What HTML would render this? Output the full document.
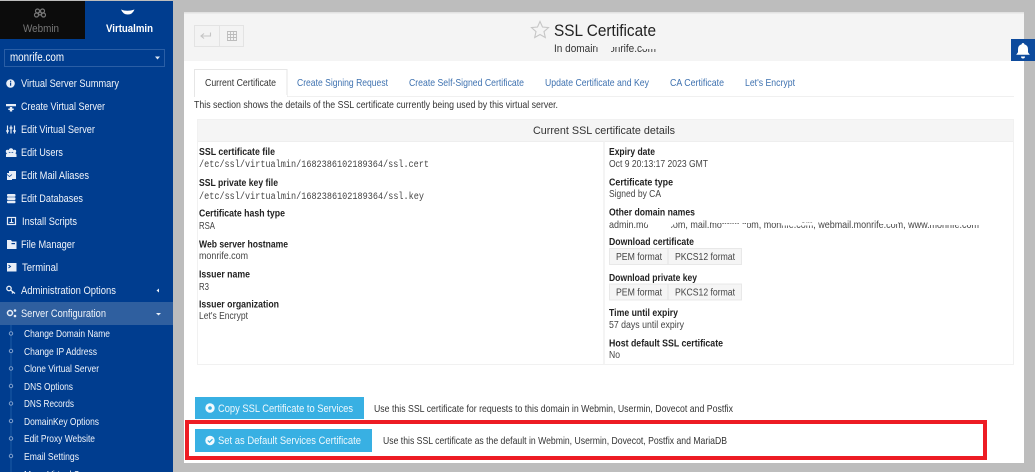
<!DOCTYPE html>
<html><head><meta charset="utf-8"><style>
html,body{margin:0;padding:0;width:1035px;height:472px;overflow:hidden;background:#bdbdbd}
svg{display:block;filter:blur(.25px)}
text{font-family:"Liberation Sans",sans-serif;font-size:10.5px;fill:#333}
.m{fill:#f0f4fa;font-size:11px}
.s{fill:#f0f4fa;font-size:10.5px}
.b{font-weight:bold;fill:#222;font-size:10.5px}
.v{fill:#444;font-size:10.5px}
.c{font-family:"Liberation Mono",monospace;fill:#444;font-size:10px}
.t{fill:#3f72b0;font-size:10.5px}
</style></head><body>
<svg width="1035" height="472" viewBox="0 0 1035 472" xmlns="http://www.w3.org/2000/svg">
<rect width="1035" height="472" fill="#bdbdbd"/>
<rect x="0" y="1" width="173" height="471" fill="#003d8f"/>
<rect x="0" y="1" width="85" height="38" fill="#0c0c0c"/>
<g fill="none" stroke="#777" stroke-width="1.2"><circle cx="37.500" cy="11" r="2"/><circle cx="42.500" cy="11" r="2"/><circle cx="36.500" cy="15" r="2"/><circle cx="43.500" cy="15" r="2"/><circle cx="40" cy="13.500" r="1.500"/></g>
<text x="23" y="32" textLength="36" lengthAdjust="spacingAndGlyphs" style="fill:#777;font-size:11px">Webmin</text>
<path d="M121 9.500q6 2.500 13.500 0q-2 5-6.700 5q-4.800 0-6.800-5z" fill="#fff"/>
<text x="106" y="32" textLength="47" lengthAdjust="spacingAndGlyphs" style="fill:#fff;font-size:11px;font-weight:bold">Virtualmin</text>
<rect x="4.500" y="49.500" width="160" height="17" fill="none" stroke="#2a5ea5"/>
<text x="10" y="61" textLength="54" lengthAdjust="spacingAndGlyphs" style="fill:#fff;font-size:11.5px">monrife.com</text>
<path d="M155 56.500h5l-2.500 3z" fill="#dfe8f4"/>

<!-- main menu icons -->
<circle cx="10.500" cy="83.500" r="4.300" fill="#e8eef7"/><rect x="10" y="82.500" width="1.200" height="3.200" fill="#003d8f"/><rect x="10" y="80.700" width="1.200" height="1.200" fill="#003d8f"/>
<path d="M6 104h10v2.200H6zM9.800 107h2.400v1.500h1.500v1.500h-1.500v1.500H9.800V110H8.300v-1.500h1.500z" fill="#e8eef7"/>
<g stroke="#e8eef7" stroke-width="1.200" fill="none"><path d="M7.500 125.500v8M11 125.500v8M14.500 125.500v8M6 131h3M9.500 128h3M13 131h3"/></g>
<g fill="#e8eef7"><circle cx="11" cy="150.500" r="2.300"/><circle cx="7.500" cy="151.500" r="1.700"/><circle cx="14.500" cy="151.500" r="1.700"/><path d="M6 157v-2.500q1-2 2.500-1.500l5 0q2-.5 3 1.500v2.500z"/></g>
<g fill="#e8eef7"><path d="M9 171h7v8H9z"/><path d="M7 173h5v7H7z"/></g><path d="M7 174.500l2.500 2 2.500-2" stroke="#003d8f" fill="none" stroke-width=".7"/>
<g fill="#e8eef7"><rect x="7" y="194" width="8.500" height="2.700" rx="1"/><rect x="7" y="197.300" width="8.500" height="2.700" rx="1"/><rect x="7" y="200.600" width="8.500" height="2.700" rx="1"/></g>
<rect x="7.500" y="217.500" width="8" height="7" fill="none" stroke="#e8eef7" stroke-width="1.200"/><path d="M11.500 218.500v3.500M9.500 222.500h4" stroke="#e8eef7"/>
<path d="M7 240h4l1 1.500h4.500v7.500H7z" fill="#e8eef7"/><rect x="11.500" y="243" width="3.500" height="1.200" fill="#003d8f"/>
<rect x="7" y="263" width="9.500" height="8.500" fill="#e8eef7"/><path d="M8.500 265l2 1.500-2 1.500" stroke="#003d8f" fill="none"/>
<circle cx="9" cy="288.500" r="2.200" fill="none" stroke="#e8eef7" stroke-width="1.300"/><path d="M10.500 290l4.500 3.500M13 292l-1 1.500" stroke="#e8eef7" stroke-width="1.300"/>
<rect x="0" y="302" width="173" height="23" fill="#2f5f9f"/>
<circle cx="10" cy="313" r="2.500" fill="none" stroke="#e8eef7" stroke-width="1.500"/><circle cx="15" cy="310.500" r="1.300" fill="#e8eef7"/><circle cx="15" cy="316" r="1.300" fill="#e8eef7"/>
<path d="M159 288.500v4l-2.500-2z" fill="#e8eef7"/>
<path d="M156 313h5l-2.500 2.500z" fill="#e8eef7"/>

<text class="m" x="21" y="87" textLength="98" lengthAdjust="spacingAndGlyphs">Virtual Server Summary</text>
<text class="m" x="21" y="110" textLength="84" lengthAdjust="spacingAndGlyphs">Create Virtual Server</text>
<text class="m" x="21" y="133" textLength="74" lengthAdjust="spacingAndGlyphs">Edit Virtual Server</text>
<text class="m" x="21" y="156" textLength="42" lengthAdjust="spacingAndGlyphs">Edit Users</text>
<text class="m" x="21" y="179" textLength="68" lengthAdjust="spacingAndGlyphs">Edit Mail Aliases</text>
<text class="m" x="21" y="202" textLength="62" lengthAdjust="spacingAndGlyphs">Edit Databases</text>
<text class="m" x="22" y="225" textLength="55" lengthAdjust="spacingAndGlyphs">Install Scripts</text>
<text class="m" x="21" y="248" textLength="54" lengthAdjust="spacingAndGlyphs">File Manager</text>
<text class="m" x="22" y="271" textLength="36" lengthAdjust="spacingAndGlyphs">Terminal</text>
<text class="m" x="21" y="294" textLength="95" lengthAdjust="spacingAndGlyphs">Administration Options</text>
<text class="m" x="21" y="317" textLength="85" lengthAdjust="spacingAndGlyphs">Server Configuration</text>

<!-- submenu -->
<rect x="10.500" y="325" width="1" height="147" fill="#1d5aa6"/>
<g fill="#003d8f" stroke="#7f9fcb" stroke-width="1"><circle cx="11" cy="333.500" r="1.700"/><circle cx="11" cy="351" r="1.700"/><circle cx="11" cy="368.500" r="1.700"/><circle cx="11" cy="386" r="1.700"/><circle cx="11" cy="403.500" r="1.700"/><circle cx="11" cy="421" r="1.700"/><circle cx="11" cy="438.500" r="1.700"/><circle cx="11" cy="456" r="1.700"/></g>
<text class="s" x="24" y="337" textLength="86" lengthAdjust="spacingAndGlyphs">Change Domain Name</text>
<text class="s" x="24" y="355" textLength="73" lengthAdjust="spacingAndGlyphs">Change IP Address</text>
<text class="s" x="24" y="372" textLength="75" lengthAdjust="spacingAndGlyphs">Clone Virtual Server</text>
<text class="s" x="24" y="390" textLength="49" lengthAdjust="spacingAndGlyphs">DNS Options</text>
<text class="s" x="24" y="407" textLength="50" lengthAdjust="spacingAndGlyphs">DNS Records</text>
<text class="s" x="24" y="425" textLength="75" lengthAdjust="spacingAndGlyphs">DomainKey Options</text>
<text class="s" x="24" y="442" textLength="71" lengthAdjust="spacingAndGlyphs">Edit Proxy Website</text>
<text class="s" x="24" y="460" textLength="55" lengthAdjust="spacingAndGlyphs">Email Settings</text>
<text class="s" x="24" y="478" textLength="75" lengthAdjust="spacingAndGlyphs">Move Virtual Server</text>

<!-- panel -->
<rect x="184" y="12" width="840" height="451" fill="#fff"/>
<rect x="184" y="12" width="840" height="49" fill="#f4f4f4"/>
<rect x="184" y="12" width="840" height="1.500" fill="#e2e2e2"/>
<rect x="194.500" y="25.500" width="49" height="21" fill="#f3f3f3" stroke="#e3e3e3"/>
<path d="M219.500 25.500v21" stroke="#e3e3e3"/>
<path d="M210.500 32.500v3.500h-9M204 33.500l-3 2.500 3 2.500" fill="none" stroke="#c4c4c4" stroke-width="1.100"/>
<path d="M227.500 31.500h9v9h-9zM230.500 31.500v9M233.500 31.500v9M227.500 34.500h9M227.500 37.500h9" fill="none" stroke="#bcbcbc" stroke-width=".9"/>
<path d="M540 21.500l2.500 5.500 6 .6-4.500 4 1.300 5.900-5.300-3-5.300 3 1.300-5.900-4.500-4 6-.6z" fill="none" stroke="#c6c6c6" stroke-width="1.100"/>
<text x="554" y="36" textLength="102" lengthAdjust="spacingAndGlyphs" style="font-size:17px;fill:#222">SSL Certificate</text>
<text x="554" y="52" textLength="102" lengthAdjust="spacingAndGlyphs" style="font-size:11px;fill:#333">In domain monrife.com</text>
<rect x="596" y="42" width="24" height="5" fill="#f4f4f4"/><rect x="599" y="47" width="12" height="6.500" fill="#f4f4f4"/><rect x="642" y="42" width="15" height="7" fill="#f4f4f4"/>
<rect x="1011" y="39" width="24" height="22" fill="#0d4a9c"/>
<path d="M1023 43a1.300 1.300 0 0 1 1.300 1.300q3.700 1 3.700 5v3l1.800 2.500h-13.600l1.800-2.500v-3q0-4 3.700-5a1.300 1.300 0 0 1 1.300-1.300zM1021 56.500h4a2 2 0 0 1-4 0z" fill="#fff"/>

<!-- tabs -->
<path d="M194 96.500h820" stroke="#f0f0f0"/>
<path d="M194.500 97V69.500h92.500V97" fill="#fff" stroke="#e6e6e6"/>
<rect x="195" y="95" width="92" height="3" fill="#fff"/>
<text x="205" y="86" textLength="71" lengthAdjust="spacingAndGlyphs" style="fill:#333;font-size:10.5px">Current Certificate</text>
<text class="t" x="297" y="86" textLength="91" lengthAdjust="spacingAndGlyphs">Create Signing Request</text>
<text class="t" x="409" y="86" textLength="115" lengthAdjust="spacingAndGlyphs">Create Self-Signed Certificate</text>
<text class="t" x="545" y="86" textLength="104" lengthAdjust="spacingAndGlyphs">Update Certificate and Key</text>
<text class="t" x="670" y="86" textLength="54" lengthAdjust="spacingAndGlyphs">CA Certificate</text>
<text class="t" x="745" y="86" textLength="50" lengthAdjust="spacingAndGlyphs">Let's Encrypt</text>
<text x="194" y="108" textLength="364" lengthAdjust="spacingAndGlyphs" style="font-size:10.5px;fill:#333">This section shows the details of the SSL certificate currently being used by this virtual server.</text>

<!-- table -->
<rect x="197.500" y="119.500" width="816" height="245" fill="#fff" stroke="#f1f1f1"/>
<rect x="198" y="120" width="815" height="21" fill="#f5f5f5"/>
<path d="M198 141.500h815" stroke="#eeeeee"/>
<path d="M604 141v223" stroke="#f1f1f1" stroke-width="1.500"/>
<text x="533" y="134" textLength="142" lengthAdjust="spacingAndGlyphs" style="font-size:11px;fill:#333">Current SSL certificate details</text>

<text class="b" x="199" y="155" textLength="76" lengthAdjust="spacingAndGlyphs">SSL certificate file</text>
<text class="c" x="199" y="167" textLength="230" lengthAdjust="spacingAndGlyphs">/etc/ssl/virtualmin/1682386102189364/ssl.cert</text>
<text class="b" x="199" y="186" textLength="79" lengthAdjust="spacingAndGlyphs">SSL private key file</text>
<text class="c" x="199" y="199" textLength="225" lengthAdjust="spacingAndGlyphs">/etc/ssl/virtualmin/1682386102189364/ssl.key</text>
<text class="b" x="199" y="216.500" textLength="86" lengthAdjust="spacingAndGlyphs">Certificate hash type</text>
<text class="v" x="199" y="229" textLength="16" lengthAdjust="spacingAndGlyphs">RSA</text>
<text class="b" x="199" y="247.500" textLength="89" lengthAdjust="spacingAndGlyphs">Web server hostname</text>
<text class="v" x="199" y="259" textLength="49" lengthAdjust="spacingAndGlyphs">monrife.com</text>
<text class="b" x="199" y="277.500" textLength="51" lengthAdjust="spacingAndGlyphs">Issuer name</text>
<text class="v" x="199" y="290" textLength="10" lengthAdjust="spacingAndGlyphs">R3</text>
<text class="b" x="199" y="307.500" textLength="80" lengthAdjust="spacingAndGlyphs">Issuer organization</text>
<text class="v" x="199" y="319" textLength="49" lengthAdjust="spacingAndGlyphs">Let's Encrypt</text>

<text class="b" x="609" y="155" textLength="46" lengthAdjust="spacingAndGlyphs">Expiry date</text>
<text class="v" x="609" y="167" textLength="99" lengthAdjust="spacingAndGlyphs">Oct 9 20:13:17 2023 GMT</text>
<text class="b" x="609" y="185.500" textLength="64" lengthAdjust="spacingAndGlyphs">Certificate type</text>
<text class="v" x="609" y="197" textLength="52" lengthAdjust="spacingAndGlyphs">Signed by CA</text>
<text class="b" x="609" y="215.500" textLength="86" lengthAdjust="spacingAndGlyphs">Other domain names</text>
<text class="v" x="609" y="228" textLength="370" lengthAdjust="spacingAndGlyphs">admin.monrife.com, mail.monrife.com, monrife.com, webmail.monrife.com, www.monrife.com</text>
<g fill="#fff"><rect x="609" y="218" width="8" height="3"/><rect x="646" y="218" width="30" height="6.500"/><rect x="648" y="224" width="23" height="5"/><rect x="712" y="218" width="40" height="5"/><rect x="722" y="224" width="25" height="5"/><rect x="770" y="219" width="30" height="4"/><rect x="782" y="223" width="32" height="2.500"/><rect x="880" y="222" width="10" height="2"/><rect x="928" y="218" width="51" height="7"/><rect x="860" y="219" width="13" height="3"/><rect x="886" y="219" width="12" height="5"/></g>
<text class="b" x="609" y="245" textLength="85" lengthAdjust="spacingAndGlyphs">Download certificate</text>
<rect x="609.500" y="248.500" width="132" height="16" fill="#f5f5f5" stroke="#e8e8e8"/><path d="M668 248.500v16" stroke="#e3e3e3"/>
<text class="v" x="616" y="260" textLength="46" lengthAdjust="spacingAndGlyphs">PEM format</text>
<text class="v" x="675" y="260" textLength="60" lengthAdjust="spacingAndGlyphs">PKCS12 format</text>
<text class="b" x="609" y="281" textLength="88" lengthAdjust="spacingAndGlyphs">Download private key</text>
<rect x="609.500" y="284" width="132" height="16" fill="#f5f5f5" stroke="#e8e8e8"/><path d="M668 284v16" stroke="#e3e3e3"/>
<text class="v" x="616" y="295.500" textLength="46" lengthAdjust="spacingAndGlyphs">PEM format</text>
<text class="v" x="675" y="295.500" textLength="60" lengthAdjust="spacingAndGlyphs">PKCS12 format</text>
<text class="b" x="609" y="316" textLength="69" lengthAdjust="spacingAndGlyphs">Time until expiry</text>
<text class="v" x="609" y="328" textLength="75" lengthAdjust="spacingAndGlyphs">57 days until expiry</text>
<text class="b" x="609" y="346.500" textLength="114" lengthAdjust="spacingAndGlyphs">Host default SSL certificate</text>
<text class="v" x="609" y="358" textLength="11" lengthAdjust="spacingAndGlyphs">No</text>

<!-- buttons -->
<rect x="195" y="397" width="169" height="22" fill="#38b0e3"/>
<circle cx="210" cy="408" r="4.700" fill="#f2fafe"/><circle cx="210" cy="408" r="1.800" fill="#38b0e3"/>
<text x="218" y="412" textLength="135" lengthAdjust="spacingAndGlyphs" style="fill:#eef8fd;font-size:11px">Copy SSL Certificate to Services</text>
<text x="374" y="412" textLength="359" lengthAdjust="spacingAndGlyphs" style="font-size:10.5px;fill:#333">Use this SSL certificate for requests to this domain in Webmin, Usermin, Dovecot and Postfix</text>
<rect x="187" y="422" width="798" height="36" fill="#fff" stroke="#ed1c24" stroke-width="4"/>
<rect x="195" y="429" width="177" height="23" fill="#38b0e3"/>
<circle cx="210" cy="440.500" r="4.700" fill="#f2fafe"/><path d="M207.800 440.500l1.700 1.700 3-3" fill="none" stroke="#38b0e3" stroke-width="1.200"/>
<text x="218" y="444" textLength="143" lengthAdjust="spacingAndGlyphs" style="fill:#eef8fd;font-size:11px">Set as Default Services Certificate</text>
<text x="383" y="444" textLength="344" lengthAdjust="spacingAndGlyphs" style="font-size:10.5px;fill:#333">Use this SSL certificate as the default in Webmin, Usermin, Dovecot, Postfix and MariaDB</text>
</svg>
</body></html>
